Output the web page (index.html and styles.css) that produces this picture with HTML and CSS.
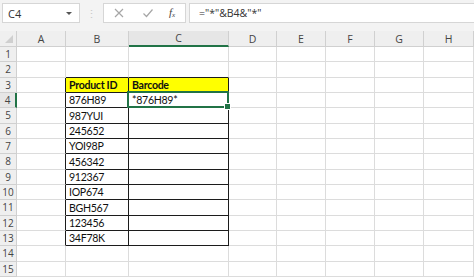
FILE: index.html
```html
<!DOCTYPE html>
<html>
<head>
<meta charset="utf-8">
<link rel="stylesheet" href="styles.css">
</head>
<body>
<div class="app">
  <div class="fbar">
    <div class="namebox"><span class="ref">C4</span><span class="caret"></span></div>
    <div class="grip">⋮</div>
    <div class="btns">
      <svg class="ic" width="12" height="12" viewBox="0 0 12 12"><path d="M2 2 L10 10 M10 2 L2 10" stroke="#a6a6a6" stroke-width="1.2" fill="none"/></svg>
      <svg class="ic" width="12" height="12" viewBox="0 0 12 12"><path d="M1.5 6.5 L4.5 9.5 L10.5 2.5" stroke="#a6a6a6" stroke-width="1.2" fill="none"/></svg>
      <span class="fx">f<sub>x</sub></span>
    </div>
    <div class="formula">="*"&amp;B4&amp;"*"</div>
  </div>
  <div class="sheet">
    <div class="h corner"></div><div class="h col">A</div><div class="h col">B</div><div class="h col sel">C</div><div class="h col">D</div><div class="h col">E</div><div class="h col">F</div><div class="h col">G</div><div class="h col">H</div>

    <div class="h row">1</div><div class="c"></div><div class="c"></div><div class="c"></div><div class="c"></div><div class="c"></div><div class="c"></div><div class="c"></div><div class="c"></div>
    <div class="h row">2</div><div class="c"></div><div class="c tp"></div><div class="c tp"></div><div class="c"></div><div class="c"></div><div class="c"></div><div class="c"></div><div class="c"></div>
    <div class="h row">3</div><div class="c lt"></div><div class="c t hd">Product ID</div><div class="c t hd">Barcode</div><div class="c"></div><div class="c"></div><div class="c"></div><div class="c"></div><div class="c"></div>
    <div class="h row rsel">4</div><div class="c lt"></div><div class="c t">876H89</div><div class="c t active">*876H89*</div><div class="c"></div><div class="c"></div><div class="c"></div><div class="c"></div><div class="c"></div>
    <div class="h row">5</div><div class="c lt"></div><div class="c t">987YUI</div><div class="c t"></div><div class="c"></div><div class="c"></div><div class="c"></div><div class="c"></div><div class="c"></div>
    <div class="h row">6</div><div class="c lt"></div><div class="c t">245652</div><div class="c t"></div><div class="c"></div><div class="c"></div><div class="c"></div><div class="c"></div><div class="c"></div>
    <div class="h row">7</div><div class="c lt"></div><div class="c t">YOI98P</div><div class="c t"></div><div class="c"></div><div class="c"></div><div class="c"></div><div class="c"></div><div class="c"></div>
    <div class="h row">8</div><div class="c lt"></div><div class="c t">456342</div><div class="c t"></div><div class="c"></div><div class="c"></div><div class="c"></div><div class="c"></div><div class="c"></div>
    <div class="h row">9</div><div class="c lt"></div><div class="c t">912367</div><div class="c t"></div><div class="c"></div><div class="c"></div><div class="c"></div><div class="c"></div><div class="c"></div>
    <div class="h row">10</div><div class="c lt"></div><div class="c t">IOP674</div><div class="c t"></div><div class="c"></div><div class="c"></div><div class="c"></div><div class="c"></div><div class="c"></div>
    <div class="h row">11</div><div class="c lt"></div><div class="c t">BGH567</div><div class="c t"></div><div class="c"></div><div class="c"></div><div class="c"></div><div class="c"></div><div class="c"></div>
    <div class="h row">12</div><div class="c lt"></div><div class="c t">123456</div><div class="c t"></div><div class="c"></div><div class="c"></div><div class="c"></div><div class="c"></div><div class="c"></div>
    <div class="h row">13</div><div class="c lt"></div><div class="c t">34F78K</div><div class="c t"></div><div class="c"></div><div class="c"></div><div class="c"></div><div class="c"></div><div class="c"></div>
    <div class="h row">14</div><div class="c"></div><div class="c"></div><div class="c"></div><div class="c"></div><div class="c"></div><div class="c"></div><div class="c"></div><div class="c"></div>
    <div class="h row">15</div><div class="c"></div><div class="c"></div><div class="c"></div><div class="c"></div><div class="c"></div><div class="c"></div><div class="c"></div><div class="c"></div>
  </div>
</div>
</body>
</html>
```
FILE: styles.css
```css
* { box-sizing: border-box; }
html, body { margin: 0; padding: 0; }
body {
  width: 474px;
  height: 278px;
  overflow: hidden;
  background: #ffffff;
  font-family: "Open Sans", "Noto Sans", sans-serif;
}
.app { width: 474px; }

.fbar {
  height: 31px;
  background: #f3f3f3;
  display: flex;
  align-items: flex-start;
  padding-top: 3px;
}
.namebox {
  margin-left: 2px;
  width: 78px;
  height: 20px;
  background: #fff;
  border: 1px solid #d6d6d6;
  display: flex;
  align-items: center;
  justify-content: space-between;
  padding: 0 7px 0 5px;
}
.ref { font-size: 11px; color: #333; }
.caret {
  width: 0; height: 0;
  border-left: 3px solid transparent;
  border-right: 3px solid transparent;
  border-top: 3px solid #555;
}
.grip {
  width: 23px;
  height: 20px;
  display: flex;
  align-items: center;
  justify-content: center;
  color: #c8c8c8;
  font-size: 11px;
}
.btns {
  width: 83px;
  height: 20px;
  background: #fff;
  border: 1px solid #d6d6d6;
  display: flex;
  align-items: center;
  padding-left: 9px;
  gap: 17px;
}
.fx {
  font-family: "Liberation Serif", serif;
  font-style: italic;
  font-size: 11px;
  color: #444;
  line-height: 1;
  margin-left: -2px;
}
.fx sub { font-size: 7px; vertical-align: -1px; }
.formula {
  margin-left: 3px;
  flex: 1;
  height: 20px;
  background: #fff;
  border: 1px solid #d6d6d6;
  border-right: none;
  display: flex;
  align-items: center;
  padding-left: 9px;
  font-size: 10.5px;
  color: #333;
}

.sheet {
  display: grid;
  grid-template-columns: 17px 49px 63px 100px 48px 49px 49px 49px 50px;
  grid-template-rows: 16px repeat(15, 15.33px);
}
.h {
  background: #efefef;
  color: #444;
  font-size: 10.5px;
  display: flex;
  align-items: center;
  justify-content: center;
  border-right: 1px solid #d0d0d0;
  border-bottom: 1px solid #d0d0d0;
}
.corner { position: relative; }
.corner::after {
  content: "";
  position: absolute;
  right: 3px;
  bottom: 3px;
  width: 8px;
  height: 8px;
  background: #cfcfcf;
  clip-path: polygon(100% 0, 100% 100%, 0 100%);
}
.col.sel {
  background: #e6e6e6;
  color: #444;
  border-bottom: 2px solid #217346;
}
.row.rsel {
  background: #e6e6e6;
  color: #444;
  border-right: 2px solid #217346;
}
.row { font-size: 10px; }

.c {
  border-right: 1px solid #dcdcdc;
  border-bottom: 1px solid #dcdcdc;
  font-family: "Lato", "Liberation Sans", sans-serif;
  font-size: 10.6px;
  letter-spacing: -0.3px;
  color: #111;
  display: flex;
  align-items: flex-end;
  padding: 0 0 1px 3px;
  white-space: nowrap;
}
.c.t { border-right-color: #1c1c1c; border-bottom-color: #1c1c1c; }
.c.tp { border-bottom-color: #1c1c1c; }
.c.lt { border-right-color: #1c1c1c; }
.c.hd { background: #ffff00; font-weight: 700; }
.c.active { position: relative; }
.c.active::before {
  content: "";
  position: absolute;
  left: -2px;
  top: -2px;
  right: -1px;
  bottom: -1px;
  border: 2px solid #217346;
}
.c.active::after {
  content: "";
  position: absolute;
  right: -3px;
  bottom: -3px;
  width: 5px;
  height: 5px;
  background: #217346;
  border: 1px solid #fff;
}
```
